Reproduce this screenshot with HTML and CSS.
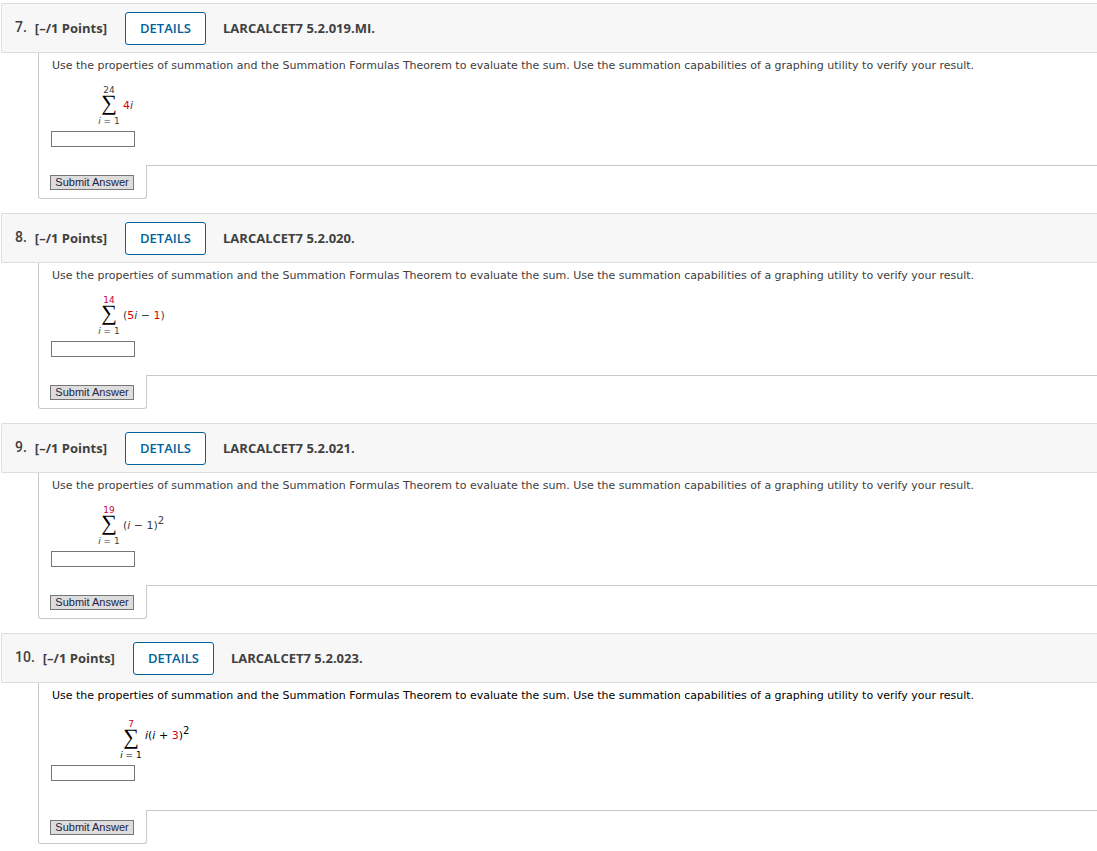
FILE: index.html
```
<!DOCTYPE html>
<html lang="en">
<head>
    <meta charset="UTF-8">
    <meta name="viewport" content="width=device-width, initial-scale=1.0">
    <title>Summation Homework</title>
    <link rel="stylesheet" href="styles.css">
</head>
<body>
    <section class="question">
        <header class="question-header">
            <span class="number">7.</span>
            <span class="points">[–/1 Points]</span>
            <button type="button" class="details">DETAILS</button>
            <h2 class="name">LARCALCET7 5.2.019.MI.</h2>
        </header>
        <div class="question-body">
            <p class="prompt">Use the properties of summation and the Summation Formulas Theorem to evaluate the sum. Use the summation capabilities of a graphing utility to verify your result.</p>
            <div class="formula">
                <div class="sum">
                    <span class="limit">24</span>
                    <span class="sigma">∑</span>
                    <span class="limit"><i>i</i> = 1</span>
                </div>
                <div class="term"><span class="red">4</span><i>i</i></div>
            </div>
            <input type="text" class="answer" aria-label="Answer to question 7">
        </div>
        <div class="question-footer">
            <div class="tab"><button type="button" class="submit">Submit Answer</button></div>
            <div class="line"></div>
        </div>
    </section>

    <section class="question">
        <header class="question-header">
            <span class="number">8.</span>
            <span class="points">[–/1 Points]</span>
            <button type="button" class="details">DETAILS</button>
            <h2 class="name">LARCALCET7 5.2.020.</h2>
        </header>
        <div class="question-body">
            <p class="prompt">Use the properties of summation and the Summation Formulas Theorem to evaluate the sum. Use the summation capabilities of a graphing utility to verify your result.</p>
            <div class="formula">
                <div class="sum">
                    <span class="limit crimson">14</span>
                    <span class="sigma">∑</span>
                    <span class="limit"><i>i</i> = 1</span>
                </div>
                <div class="term">(<span class="red">5</span><i>i</i> − <span class="red">1</span>)</div>
            </div>
            <input type="text" class="answer" aria-label="Answer to question 8">
        </div>
        <div class="question-footer">
            <div class="tab"><button type="button" class="submit">Submit Answer</button></div>
            <div class="line"></div>
        </div>
    </section>

    <section class="question">
        <header class="question-header">
            <span class="number">9.</span>
            <span class="points">[–/1 Points]</span>
            <button type="button" class="details">DETAILS</button>
            <h2 class="name">LARCALCET7 5.2.021.</h2>
        </header>
        <div class="question-body">
            <p class="prompt">Use the properties of summation and the Summation Formulas Theorem to evaluate the sum. Use the summation capabilities of a graphing utility to verify your result.</p>
            <div class="formula">
                <div class="sum">
                    <span class="limit crimson">19</span>
                    <span class="sigma">∑</span>
                    <span class="limit"><i>i</i> = 1</span>
                </div>
                <div class="term">(<i>i</i> − 1)<sup>2</sup></div>
            </div>
            <input type="text" class="answer" aria-label="Answer to question 9">
        </div>
        <div class="question-footer">
            <div class="tab"><button type="button" class="submit">Submit Answer</button></div>
            <div class="line"></div>
        </div>
    </section>

    <section class="question current">
        <header class="question-header">
            <span class="number">10.</span>
            <span class="points">[–/1 Points]</span>
            <button type="button" class="details">DETAILS</button>
            <h2 class="name">LARCALCET7 5.2.023.</h2>
        </header>
        <div class="question-body">
            <p class="prompt">Use the properties of summation and the Summation Formulas Theorem to evaluate the sum. Use the summation capabilities of a graphing utility to verify your result.</p>
            <div class="formula">
                <div class="sum">
                    <span class="limit crimson">7</span>
                    <span class="sigma">∑</span>
                    <span class="limit"><i>i</i> = 1</span>
                </div>
                <div class="term"><i>i</i>(<i>i</i> + <span class="crimson">3</span>)<sup>2</sup></div>
            </div>
            <input type="text" class="answer" aria-label="Answer to question 10">
        </div>
        <div class="question-footer">
            <div class="tab"><button type="button" class="submit">Submit Answer</button></div>
            <div class="line"></div>
        </div>
    </section>
</body>
</html>
```
FILE: styles.css
```
* {
    box-sizing: border-box;
}

body {
    margin: 0;
    padding: 3px 0 0 1px;
    background-color: #ffffff;
    color: #404040;
    font-family: Verdana, "DejaVu Sans", sans-serif;
    font-size: 11px;
}

.question {
    margin-bottom: 14px;
}

.question:last-child {
    margin-bottom: 0;
}

.question-header {
    display: flex;
    align-items: center;
    height: 50px;
    padding-left: 13px;
    background-color: #f7f7f7;
    border: 1px solid #dddddd;
    border-right: none;
    border-radius: 2px 0 0 2px;
    font-family: "Open Sans", sans-serif;
    font-size: 13px;
    line-height: 18px;
}

.number {
    margin-right: 8px;
    padding-bottom: 2px;
    font-family: Roboto, sans-serif;
    font-weight: 500;
    font-size: 14px;
}

.points {
    margin-right: 18px;
    font-weight: 700;
}

.details {
    width: 81px;
    height: 33px;
    margin-right: 17px;
    padding: 0;
    background-color: #ffffff;
    border: 1px solid #00629b;
    border-radius: 3px;
    color: #00629b;
    font-family: "Open Sans", sans-serif;
    font-weight: 600;
    font-size: 13px;
}

.name {
    margin: 0;
    font-size: 13px;
    font-weight: 700;
}

.question-body {
    margin-left: 37px;
    padding: 4px 12px 18px;
    border-left: 1px solid #c8c8c8;
}

.prompt {
    margin: 0 0 10px 1px;
    line-height: 17px;
}

.formula {
    display: flex;
    align-items: center;
    gap: 3px;
    margin-left: 47px;
    margin-bottom: 4px;
}

.sum {
    display: flex;
    flex-direction: column;
    align-items: center;
    width: 22px;
    white-space: nowrap;
}

.limit {
    font-size: 9px;
    line-height: 12px;
}

.sigma {
    margin-bottom: 5px;
    color: #000000;
    font-family: "Liberation Serif", serif;
    font-size: 22px;
    line-height: 14px;
}

.term {
    line-height: 16px;
}

.term sup {
    font-size: 10px;
    line-height: 0;
}

.red {
    color: #dd0000;
}

.crimson {
    color: #cc0033;
}

.answer {
    display: block;
    width: 84px;
    height: 16px;
    padding: 1px 2px;
    background-color: #ffffff;
    border: 1px solid #767676;
    font-size: 11px;
}

.question-footer {
    display: flex;
    margin-left: 37px;
}

.tab {
    width: 109px;
    padding: 10px 11px 8px;
    border: 1px solid #c8c8c8;
    border-top: none;
    border-radius: 0 0 3px 3px;
}

.line {
    flex: 1;
    border-top: 1px solid #c8c8c8;
}

.submit {
    display: block;
    width: 84px;
    height: 15px;
    padding: 0;
    background-color: #dddddd;
    border: 1px solid #767676;
    color: #222244;
    font-family: Arial, "Liberation Sans", sans-serif;
    font-size: 11px;
    line-height: 13px;
    white-space: nowrap;
}

.current .question-body {
    padding-bottom: 29px;
    color: #000000;
}

.current .formula {
    margin-top: 14px;
    margin-left: 69px;
}

.current .term {
    padding-bottom: 8px;
}
```
